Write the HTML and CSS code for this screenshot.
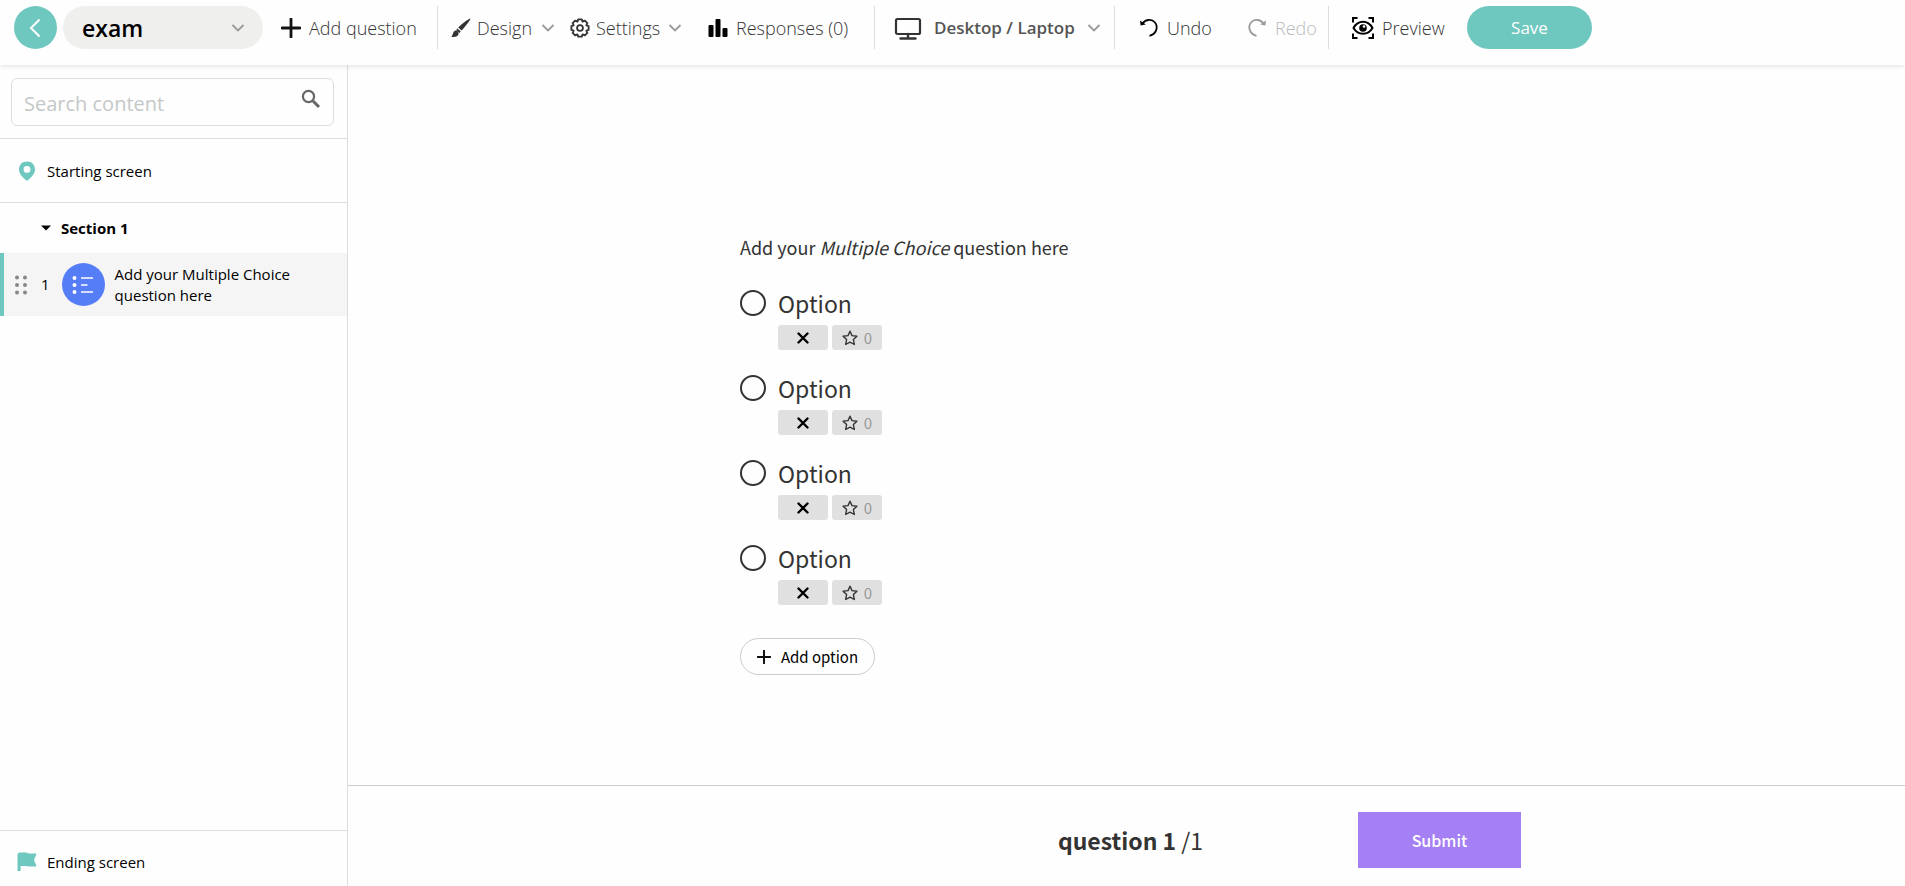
FILE: index.html
```
<!DOCTYPE html>
<html lang="en">
<head>
  <meta charset="UTF-8" />
  <meta name="viewport" content="width=device-width, initial-scale=1.0"/>
  <title>exam</title>

  <link rel="stylesheet" href="styles.css">
</head>
<body>

  <!-- shared icons -->
  <svg class="sprite" width="0" height="0" aria-hidden="true">
    <symbol id="chevron" viewBox="0 0 14 10"><path d="M1.5 2 L7 7.5 L12.5 2" fill="none" stroke="#999" stroke-width="1.8"/></symbol>
    <symbol id="cross" viewBox="0 0 12 12"><path d="M1.5 1.5 L10.5 10.5 M10.5 1.5 L1.5 10.5" stroke="#000" stroke-width="2.4" stroke-linecap="round"/></symbol>
    <symbol id="star" viewBox="0 0 16 16"><path d="M8 1.2 L10 5.6 L14.9 6.2 L11.4 9.5 L12.3 14.5 L8 12.2 L3.7 14.5 L4.6 9.5 L1.1 6.2 L6 5.6 Z" fill="none" stroke="#333" stroke-width="1.4" stroke-linejoin="round"/></symbol>
    <symbol id="plus" viewBox="0 0 20 20"><path d="M10 1 V19 M1 10 H19" stroke="#111" stroke-width="2.8" stroke-linecap="round"/></symbol>
  </svg>

  <header class="toolbar">
    <button type="button" class="back" aria-label="Back">
      <svg width="14" height="20" viewBox="0 0 14 20"><path d="M10.5 1.5 L2 10 L10.5 18.5" fill="none" stroke="#fff" stroke-width="2"/></svg>
    </button>
    <button type="button" class="name">exam <svg width="14" height="10"><use href="#chevron"/></svg></button>

    <button type="button" class="tool add-question"><svg width="20" height="20"><use href="#plus"/></svg>Add question</button>

    <div class="group design-group">
      <button type="button" class="tool design">
        <svg width="20" height="20" viewBox="0 0 20 20"><path d="M19.4 0.6 C20 1.3 14 9 10.6 12.6 L7.2 9.6 C10.5 6 18.7 0 19.4 0.6 Z M6.4 10.4 L9.8 13.6 L8.4 14.9 L5.2 11.9 Z M4.5 12.6 C6 12.6 7.8 14.2 7.6 15.8 C7.2 18.8 3.6 19.6 0.3 18.8 C2.2 17.6 1.6 13.2 4.5 12.6 Z" fill="#333"/></svg>
        Design <svg class="chev" width="14" height="10"><use href="#chevron"/></svg>
      </button>
      <button type="button" class="tool settings">
        <svg width="20" height="20" viewBox="0 0 22 22"><g fill="none" stroke="#333" stroke-width="2" stroke-linejoin="round"><path d="M9 1.5 H13 L13.8 4 L16.3 2.9 L19.1 5.7 L18 8.2 L20.5 9 V13 L18 13.8 L19.1 16.3 L16.3 19.1 L13.8 18 L13 20.5 H9 L8.2 18 L5.7 19.1 L2.9 16.3 L4 13.8 L1.5 13 V9 L4 8.2 L2.9 5.7 L5.7 2.9 L8.2 4 Z"/><circle cx="11" cy="11" r="3.2"/></g></svg>
        Settings <svg class="chev" width="14" height="10"><use href="#chevron"/></svg>
      </button>
      <button type="button" class="tool responses">
        <svg width="20" height="20" viewBox="0 0 20 20"><g fill="#000"><rect x="0.5" y="7" width="5" height="12" rx="1"/><rect x="7.5" y="1" width="5" height="18" rx="1"/><rect x="14.5" y="10" width="5" height="9" rx="1"/></g></svg>
        Responses (0)
      </button>
    </div>

    <div class="group">
      <button type="button" class="tool device">
        <svg width="28" height="24" viewBox="0 0 28 24"><rect x="2" y="3" width="24" height="15" rx="1.5" fill="none" stroke="#333" stroke-width="2.2"/><path d="M14 18 V22 M6.5 22.5 H21.5" stroke="#333" stroke-width="2.4" stroke-linecap="round"/></svg>
        Desktop / Laptop <svg class="chev" width="14" height="10"><use href="#chevron"/></svg>
      </button>
    </div>

    <div class="group history">
      <button type="button" class="tool undo">
        <svg width="20" height="20" viewBox="0 0 20 20"><path d="M3.5 5.5 C7 0.8 13 0.8 16 4.5 C19.5 9 17.5 16 10.5 17.8" fill="none" stroke="#000" stroke-width="1.8"/><path d="M1 2.6 L1.6 7.6 L6.8 6.4 Z" fill="#000"/></svg>
        Undo
      </button>
      <button type="button" class="tool redo" disabled>
        <svg width="20" height="20" viewBox="0 0 20 20"><path d="M16.5 5.5 C13 0.8 7 0.8 4 4.5 C0.5 9 2.5 16 9.5 17.8" fill="none" stroke="#999" stroke-width="1.8"/><path d="M19 2.6 L18.4 7.6 L13.2 6.4 Z" fill="#999"/></svg>
        Redo
      </button>
    </div>

    <div class="group preview-group">
      <button type="button" class="tool preview">
        <svg width="22" height="22" viewBox="0 0 22 22"><g fill="none" stroke="#000" stroke-width="2"><path d="M1 5.5 V1 H5.5 M16.5 1 H21 V5.5 M21 16.5 V21 H16.5 M5.5 21 H1 V16.5"/><path d="M1.5 11 C6 2.8 16 2.8 20.5 11 C16 18.6 6 18.6 1.5 11 Z"/></g><circle cx="11" cy="11" r="3.8" fill="#000"/><circle cx="12" cy="9.5" r="1.3" fill="#fff"/></svg>
        Preview
      </button>
    </div>

    <button type="button" class="save">Save</button>
  </header>

  <div class="editor">
    <aside class="sidebar">
      <form class="search">
        <input type="text" placeholder="Search content" aria-label="Search content">
        <button type="button" aria-label="Search">
          <svg width="20" height="20" viewBox="0 0 20 20"><circle cx="7.5" cy="7.5" r="5.6" fill="none" stroke="#666" stroke-width="2.2"/><path d="M12 12 L18 18" stroke="#666" stroke-width="3"/></svg>
        </button>
      </form>

      <a href="#start" class="screen start">
        <svg width="20" height="20" viewBox="0 0 20 20"><path d="M10 0.5 C5 0.5 2 4 2 8.6 C2 13 5.5 16 8.7 19 Q10 20 11.3 19 C14.5 16 18 13 18 8.6 C18 4 15 0.5 10 0.5 Z M10 5 A3.4 3.4 0 1 1 10 11.8 A3.4 3.4 0 1 1 10 5 Z" fill="#6fc8c0" fill-rule="evenodd"/></svg>
        Starting screen
      </a>

      <button type="button" class="section">
        <svg width="10" height="6" viewBox="0 0 10 6"><path d="M0 0.5 H10 L5 5.5 Z" fill="#000"/></svg>
        Section 1
      </button>

      <a href="#question" class="question-item">
        <svg width="12" height="20" viewBox="0 0 12 20"><g fill="#888"><circle cx="2" cy="2.5" r="2"/><circle cx="10" cy="2.5" r="2"/><circle cx="2" cy="10" r="2"/><circle cx="10" cy="10" r="2"/><circle cx="2" cy="17.5" r="2"/><circle cx="10" cy="17.5" r="2"/></g></svg>
        <span class="number">1</span>
        <span class="type">
          <svg width="22" height="20" viewBox="0 0 22 20"><g fill="#fff"><circle cx="2.5" cy="3" r="2"/><circle cx="2.5" cy="10" r="2"/><circle cx="2.5" cy="17" r="2"/></g><path d="M9 3 H21 M9 10 H15.5 M9 17 H21" stroke="#fff" stroke-width="1.6"/></svg>
        </span>
        <span class="title">Add your Multiple Choice question here</span>
      </a>

      <a href="#end" class="screen end">
        <svg width="20" height="20" viewBox="0 0 20 20"><path d="M3 0.5 H9 Q11 1.6 13 1.6 H19 Q19.8 1.8 19.3 2.6 L17 8 L19.3 13.6 Q19.8 14.6 18.8 14.6 H12 Q10 14 8 14 H3.6 V19 H0.5 V3 Q0.5 0.5 3 0.5 Z" fill="#6fc8c0"/></svg>
        Ending screen
      </a>
    </aside>

    <main>
      <form class="canvas">
        <div class="content">
          <p class="question">Add your <em>Multiple Choice</em> question here</p>

          <div class="option">
            <input type="radio" name="answer" id="option1">
            <label for="option1">Option</label>
            <div class="chips">
              <button type="button" aria-label="Remove"><svg width="12" height="12"><use href="#cross"/></svg></button>
              <button type="button"><svg width="16" height="16"><use href="#star"/></svg>0</button>
            </div>
          </div>
          <div class="option">
            <input type="radio" name="answer" id="option2">
            <label for="option2">Option</label>
            <div class="chips">
              <button type="button" aria-label="Remove"><svg width="12" height="12"><use href="#cross"/></svg></button>
              <button type="button"><svg width="16" height="16"><use href="#star"/></svg>0</button>
            </div>
          </div>
          <div class="option">
            <input type="radio" name="answer" id="option3">
            <label for="option3">Option</label>
            <div class="chips">
              <button type="button" aria-label="Remove"><svg width="12" height="12"><use href="#cross"/></svg></button>
              <button type="button"><svg width="16" height="16"><use href="#star"/></svg>0</button>
            </div>
          </div>
          <div class="option">
            <input type="radio" name="answer" id="option4">
            <label for="option4">Option</label>
            <div class="chips">
              <button type="button" aria-label="Remove"><svg width="12" height="12"><use href="#cross"/></svg></button>
              <button type="button"><svg width="16" height="16"><use href="#star"/></svg>0</button>
            </div>
          </div>

          <button type="button" class="add-option"><svg width="14" height="14"><use href="#plus"/></svg>Add option</button>
        </div>
      </form>

      <footer>
        <div class="content pager">
          <p><b>question 1</b> /1</p>
          <button type="button" class="submit">Submit</button>
        </div>
      </footer>
    </main>
  </div>

</body>
</html>
```
FILE: styles.css
```
* {
  box-sizing: border-box;
}

body {
  margin: 0;
  height: 100vh;
  display: flex;
  flex-direction: column;
  font-family: "Open Sans", "Noto Sans", sans-serif;
  font-size: 15px;
  color: #000;
  background-color: #fefefe;
}

button, input {
  font-family: inherit;
  font-size: inherit;
  color: inherit;
}

button {
  padding: 0;
  border: none;
  background: none;
  cursor: pointer;
}

a {
  color: inherit;
  text-decoration: none;
}

svg {
  flex: none;
}

.sprite {
  position: absolute;
}

/* toolbar */
.toolbar {
  display: flex;
  align-items: flex-start;
  height: 65px;
  padding: 6px 14px;
  box-shadow: 0 1px 5px rgba(0,0,0,0.12);
  z-index: 1;
}

.back {
  width: 43px;
  height: 43px;
  border-radius: 50%;
  background-color: #6fc8c0;
  display: flex;
  align-items: center;
  justify-content: center;
}

.name {
  display: flex;
  align-items: center;
  justify-content: space-between;
  width: 200px;
  height: 43px;
  margin-left: 6px;
  padding: 0 18px 0 19px;
  border-radius: 22px;
  background-color: #efefee;
  font-size: 23px;
  font-weight: 600;
}

.tool {
  display: flex;
  align-items: center;
  gap: 8px;
  height: 43px;
  font-size: 18px;
  font-weight: 300;
  color: #333;
  white-space: nowrap;
}

.tool .chev {
  margin-left: auto;
}

.group {
  display: flex;
  align-items: center;
  border-left: 1px solid #ddd;
}

.add-question {
  width: 156px;
  margin-left: 18px;
}

.design {
  width: 104px;
  margin-left: 13px;
  gap: 6px;
}

.settings {
  width: 112px;
  margin-left: 15px;
  gap: 6px;
}

.responses {
  width: 144px;
  margin-left: 26px;
}

.design-group {
  width: 437px;
}

.device {
  width: 206px;
  margin: 0 14px 0 19px;
  gap: 12px;
  font-size: 17px;
  font-weight: 600;
  color: #555;
}

.undo {
  width: 76px;
  margin-left: 24px;
}

.redo {
  width: 72px;
  margin-left: 32px;
  color: #bbb;
}

.history {
  width: 214px;
}

.preview-group {
  width: 139px;
}

.preview {
  margin-left: 23px;
}

.save {
  width: 125px;
  height: 43px;
  border-radius: 22px;
  background-color: #6fc8c0;
  font-size: 17px;
  color: white;
}

/* sidebar */
.editor {
  flex: 1;
  display: flex;
  min-height: 0;
}

.sidebar {
  width: 348px;
  flex: none;
  display: flex;
  flex-direction: column;
  border-right: 1px solid #ddd;
}

.search {
  display: flex;
  height: 48px;
  margin: 13px 13px 12px 11px;
  padding: 0 12px 2px;
  border: 1px solid #ddd;
  border-radius: 6px;
}

.search input {
  flex: 1;
  min-width: 0;
  padding: 4px 0 0;
  border: none;
  outline: none;
  background: none;
  font-size: 20px;
}

.search input::placeholder {
  color: #c4c8c8;
}

.screen {
  display: flex;
  align-items: center;
  gap: 10px;
  padding: 0 17px;
  border-top: 1px solid #ddd;
}

.start {
  height: 65px;
  border-bottom: 1px solid #ddd;
}

.end {
  height: 56px;
  margin-top: auto;
  padding-top: 6px;
}

.section {
  display: flex;
  align-items: center;
  gap: 10px;
  height: 50px;
  padding-left: 41px;
  font-weight: bold;
}

.question-item {
  display: flex;
  align-items: center;
  height: 63px;
  padding: 0 40px 0 11px;
  border-left: 4px solid #6fc8c0;
  background-color: #f5f5f5;
  line-height: 21px;
}

.number {
  margin-left: 14px;
}

.type {
  display: flex;
  align-items: center;
  justify-content: center;
  width: 43px;
  height: 43px;
  flex: none;
  margin: 0 10px 0 12px;
  border-radius: 50%;
  background-color: #557df6;
}

/* question */
main {
  flex: 1;
  display: flex;
  flex-direction: column;
  font-family: "Noto Sans CJK SC", sans-serif;
  color: #333;
}

.canvas {
  flex: 1;
  padding: 170px 0 0 8px;
}

.content {
  width: 100%;
  max-width: 781px;
  margin: 0 auto;
}

.question {
  margin: 0 0 31px;
  font-size: 18px;
  line-height: 24px;
}

.option {
  display: grid;
  grid-template-columns: 26px auto;
  grid-template-rows: 26px 25px;
  justify-content: start;
  align-items: center;
  gap: 9px 12px;
  height: 85px;
}

.option input {
  appearance: none;
  width: 26px;
  height: 26px;
  margin: 0;
  border: 2px solid #333;
  border-radius: 50%;
}

.option label {
  font-size: 23px;
  line-height: 26px;
}

.chips {
  grid-column: 2;
  display: flex;
  gap: 4px;
}

.chips button {
  display: flex;
  align-items: center;
  justify-content: center;
  gap: 6px;
  width: 50px;
  height: 25px;
  border-radius: 3px;
  background-color: #e0e0e0;
  font-size: 15px;
  color: #999;
}

.add-option {
  display: flex;
  align-items: center;
  justify-content: center;
  gap: 10px;
  width: 135px;
  height: 37px;
  margin-top: 8px;
  border: 1px solid #ccc;
  border-radius: 19px;
  font-size: 15px;
  color: #000;
}

footer {
  padding: 26px 0 18px 8px;
  border-top: 1px solid #ccc;
}

.pager {
  display: grid;
  grid-template-columns: 1fr auto 1fr;
  align-items: center;
}

.pager p {
  grid-column: 2;
  margin: 0;
  font-size: 23px;
  line-height: 32px;
}

.submit {
  justify-self: end;
  width: 163px;
  height: 56px;
  background-color: #a580f4;
  font-size: 16px;
  font-weight: 500;
  color: white;
}
```
